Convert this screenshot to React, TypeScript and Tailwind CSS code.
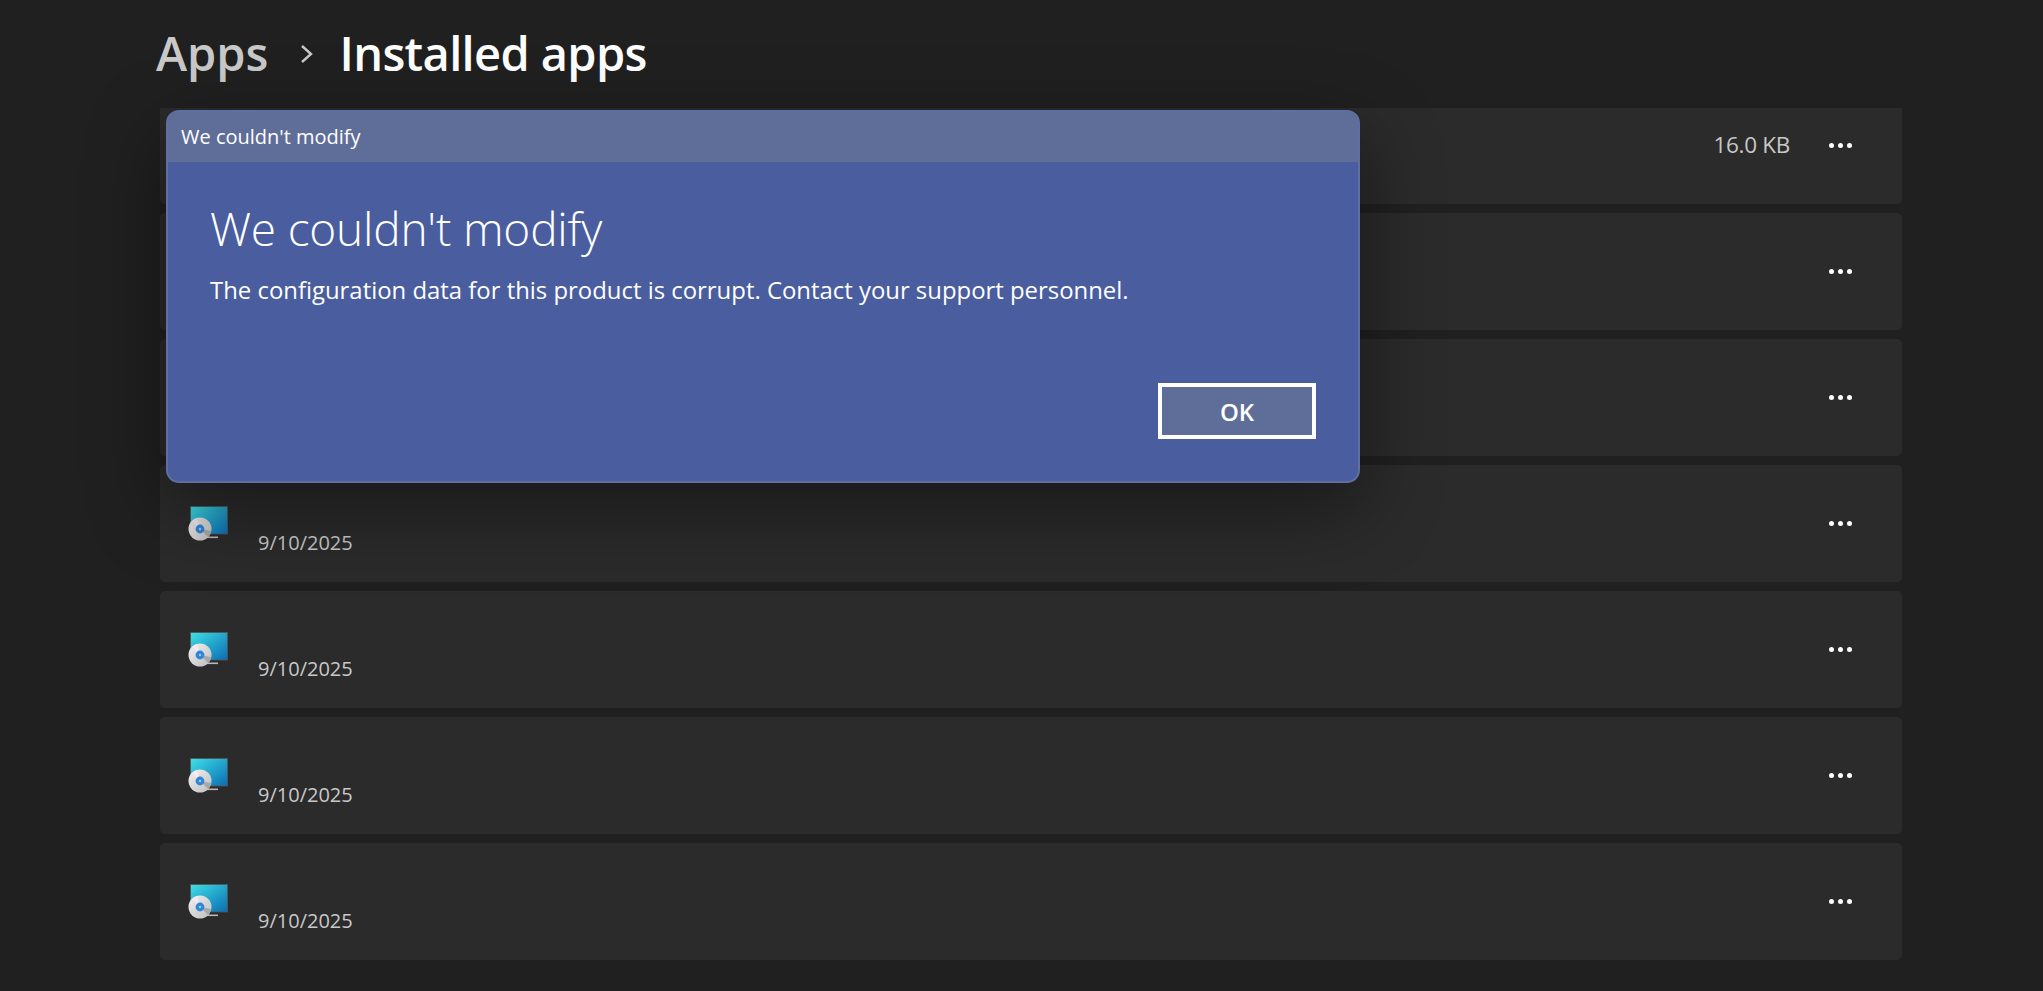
import React from "react";

const AppIcon = ({ id }: { id: string }) => (
  <svg width="42" height="36" viewBox="0 0 42 36" className="block">
    <defs>
      <linearGradient id={`screen-${id}`} x1="0" y1="0" x2="1" y2="1">
        <stop offset="0" stopColor="#3fe0e6" />
        <stop offset="1" stopColor="#0a6cb4" />
      </linearGradient>
      <linearGradient id={`disc-${id}`} x1="0" y1="0" x2="1" y2="1">
        <stop offset="0" stopColor="#f2f2f2" />
        <stop offset="1" stopColor="#bdbdbd" />
      </linearGradient>
    </defs>
    <rect x="2.5" y="0.5" width="37" height="27.5" fill={`url(#screen-${id})`} stroke="#555" strokeWidth="0.8" />
    <rect x="18" y="30.5" width="12" height="1.6" fill="#b9b9b9" />
    <circle cx="12" cy="23" r="11.5" fill={`url(#disc-${id})`} />
    <path d="M12 23 L4 15 A11.5 11.5 0 0 1 9 12 Z" fill="#f8e8f4" />
    <path d="M12 23 L20 31 A11.5 11.5 0 0 0 23 25 Z" fill="#a9a9a9" />
    <circle cx="12" cy="23" r="4.4" fill="#2f86d8" />
    <circle cx="12" cy="23" r="1.2" fill="#9fcdf2" />
  </svg>
);

const Dots = () => (
  <div className="flex w-[26px] items-center justify-center gap-[4px]">
    <span className="h-[5px] w-[5px] rounded-full bg-white" />
    <span className="h-[5px] w-[5px] rounded-full bg-white" />
    <span className="h-[5px] w-[5px] rounded-full bg-white" />
  </div>
);

const Row = ({ id, date, size }: { id: number; date?: string; size?: string }) => (
  <div className="flex h-[117px] shrink-0 rounded-[5px] bg-[#2b2b2b] pl-[28px] pr-[49px]">
    <div className="mt-[41px]">
      <AppIcon id={String(id)} />
    </div>
    <div className="ml-[28px] mt-[65px] text-[20px] leading-[26px] text-[#c8c8c8]">{date}</div>
    <div className="ml-auto mt-[43px] flex h-[30px] items-center gap-[37px]">
      {size && <span className="text-[22.5px] leading-[30px] tracking-[-0.3px] text-[#c8c8c8]">{size}</span>}
      <Dots />
    </div>
  </div>
);

export default function App() {
  return (
    <div className="relative h-[991px] w-full overflow-hidden bg-[#202020] font-['Open_Sans','Noto_Sans',sans-serif]">
      <div className="flex h-[108px] items-start pl-[156px] pt-[21px] text-[47px] font-semibold leading-[64px]">
        <span className="text-[#c9c9c9]">Apps</span>
        <svg width="16" height="20" viewBox="0 0 16 20" className="ml-[31px] mr-[24px] mt-[23px]">
          <path d="M3 2 L12 10 L3 18" fill="none" stroke="#c9c9c9" strokeWidth="2.4" />
        </svg>
        <span className="tracking-[-0.65px] text-white">Installed apps</span>
      </div>

      <div className="mx-[160px] h-[883px] w-[1742px] overflow-hidden">
        <div className="-mt-[21px] flex flex-col gap-[9px]">
          <Row id={1} size="16.0 KB" />
          <Row id={2} />
          <Row id={3} />
          <Row id={4} date="9/10/2025" />
          <Row id={5} date="9/10/2025" />
          <Row id={6} date="9/10/2025" />
          <Row id={7} date="9/10/2025" />
        </div>
      </div>

      <div className="absolute left-[166px] top-[110px] flex h-[373px] w-[1194px] flex-col overflow-hidden rounded-[13px] border-2 border-[#5f6f9f] bg-[#4a5d9e] shadow-[0_24px_80px_rgba(0,0,0,0.45)]">
        <div className="flex h-[50px] shrink-0 items-center bg-[#5f6e99] pl-[13px] text-[20px] text-white">
          We couldn't modify
        </div>
        <div className="flex flex-1 flex-col pl-[42px] pr-[42px]">
          <div className="mt-[36px] text-[46px] font-light leading-[60px] tracking-[-0.2px] text-white">We couldn't modify</div>
          <div className="mt-[16px] text-[23.9px] font-normal leading-[32px] text-white">
            The configuration data for this product is corrupt. Contact your support personnel.
          </div>
          <div className="mt-auto mb-[42px] flex justify-end">
            <button className="h-[56px] w-[158px] border-4 border-white bg-[#5f6e99] pt-[2px] text-[24px] font-semibold text-white">
              OK
            </button>
          </div>
        </div>
      </div>
    </div>
  );
}
